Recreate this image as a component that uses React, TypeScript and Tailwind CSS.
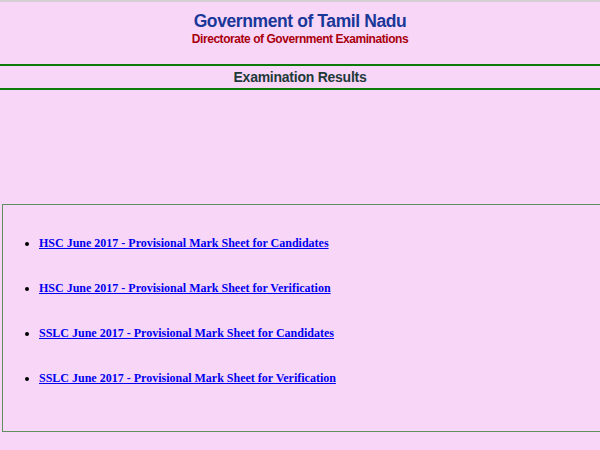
import React from "react";

const results = [
  "HSC June 2017 - Provisional Mark Sheet for Candidates",
  "HSC June 2017 - Provisional Mark Sheet for Verification",
  "SSLC June 2017 - Provisional Mark Sheet for Candidates",
  "SSLC June 2017 - Provisional Mark Sheet for Verification"
];

export default function App() {
  return (
    <div className="min-h-[450px] overflow-hidden bg-[#f8d6f8] border-t-2 border-[#d4d0d4] font-['Liberation_Sans',Arial,sans-serif]">
      {/* header */}
      <div className="pt-[8px] text-center">
        <h1 className="text-[17.5px] leading-[22px] font-bold tracking-[-0.4px] text-[#1a3898]">
          Government of Tamil Nadu
        </h1>
        <p className="text-[12px] leading-[14px] font-bold tracking-[-0.45px] text-[#a8000c]">
          Directorate of Government Examinations
        </p>
      </div>

      <div className="mt-[18px] h-[2px] bg-[#0b7a0b]" />
      <div className="h-[22px] flex items-center justify-center text-[14px] font-bold tracking-[-0.25px] text-[#1e3a38]">
        Examination Results
      </div>
      <div className="h-[2px] bg-[#0b7a0b]" />

      {/* links box */}
      <div className="mt-[114px] ml-[2px] mr-[-10px] h-[228px] border border-[#5f8f5f] pt-[29px]">
        <ul className="list-disc pl-[36px] font-['Liberation_Serif','Times_New_Roman',serif] text-[12px] font-bold">
          {results.map((r) => (
            <li key={r} className="h-[45px] leading-[18px]">
              <a href="#" className="text-[#0000ee] underline">
                {r}
              </a>
            </li>
          ))}
        </ul>
      </div>
    </div>
  );
}
